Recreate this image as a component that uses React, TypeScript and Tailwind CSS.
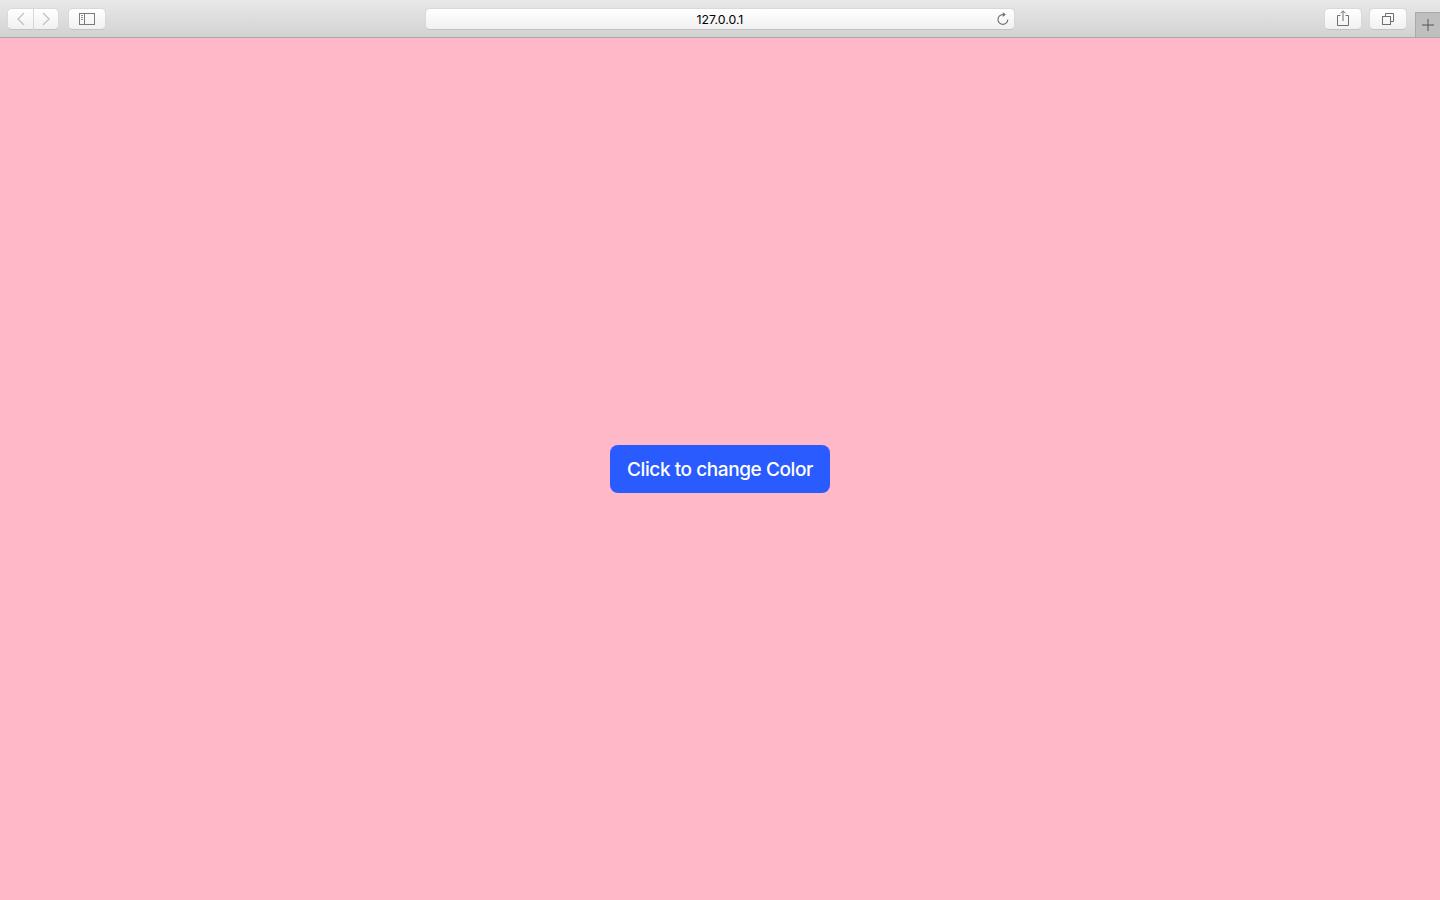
import React from "react";

const btn =
  "h-[22px] flex items-center justify-center rounded-[5px] bg-gradient-to-b from-[#ffffff] to-[#f1f1f1] border border-[#d9d9d9] border-b-[#c2c2c2]";

export default function App() {
  return (
    <div className="min-h-screen flex flex-col bg-[#ffb8c8] font-['Inter','Liberation_Sans',sans-serif]">
      <header className="h-[38px] shrink-0 flex pl-[7px] bg-gradient-to-b from-[#e9e9e9] to-[#d2d2d2] border-b border-[#a9a9a9]">
        <div className="flex pt-2">
          <div className={`${btn} w-[27px] rounded-r-[2px]`}>
            <svg width="10" height="14" viewBox="0 0 10 14" fill="none" stroke="#c4c4c4" strokeWidth="1.4">
              <path d="M8 1 2 7l6 6" />
            </svg>
          </div>
          <div className={`${btn} w-[26px] rounded-l-[2px] -ml-px`}>
            <svg width="10" height="14" viewBox="0 0 10 14" fill="none" stroke="#c4c4c4" strokeWidth="1.4">
              <path d="M2 1l6 6-6 6" />
            </svg>
          </div>
          <div className={`${btn} w-[38px] ml-[9px]`}>
            <svg width="16" height="12" viewBox="0 0 16 12" fill="none" stroke="#7a7a7a">
              <rect x="0.5" y="0.5" width="15" height="11" />
              <path d="M5.5 0.5v11" />
              <path d="M2 2.5h2M2 4.5h2M2 6.5h2" strokeWidth="0.8" />
            </svg>
          </div>
        </div>
        <div className="pt-2 ml-[319px]">
          <div className={`${btn} w-[590px] relative text-[12.3px] text-black pt-0.5`}>
            127.0.0.1
            <svg
              className="absolute right-[4px] top-[3px]"
              width="14"
              height="14"
              viewBox="0 0 14 14"
              fill="none"
              stroke="#6f6f6f"
              strokeWidth="1.1"
            >
              <path d="M11.8 7.5A4.9 4.9 0 1 1 7 2.6h1.2" />
              <path d="M6.8 0.2 9.8 2.6 6.8 5z" fill="#6f6f6f" stroke="none" />
            </svg>
          </div>
        </div>
        <div className="flex pt-2 ml-[309px] gap-[7px]">
          <div className={`${btn} w-[38px]`}>
            <svg className="-mt-0.5" width="12" height="16" viewBox="0 0 12 16" fill="none" stroke="#6f6f6f">
              <path d="M3.5 5.5h-3v10h11v-10h-3" />
              <path d="M6 11V1M3.5 3.3 6 .8l2.5 2.5" />
            </svg>
          </div>
          <div className={`${btn} w-[38px]`}>
            <svg width="12" height="12" viewBox="0 0 12 12" fill="none" stroke="#6f6f6f">
              <rect x="0.5" y="3.5" width="8" height="8" />
              <path d="M3.5 3.5v-3h8v8h-3" />
            </svg>
          </div>
        </div>
        <div className="ml-[8px] w-[25px] h-[25px] mt-3 flex items-center justify-center bg-[#bfbfbf] border-l border-t border-[#a9a9a9]">
          <svg width="12" height="12" viewBox="0 0 12 12" stroke="#555555" strokeWidth="1">
            <path d="M6 0v12M0 6h12" />
          </svg>
        </div>
      </header>
      <main className="flex-1 flex items-center justify-center">
        <button className="w-[220px] h-12 pt-0.5 rounded-lg bg-[#2a5bff] text-white text-[19px] tracking-[-0.42px] font-medium">
          Click to change Color
        </button>
      </main>
    </div>
  );
}
